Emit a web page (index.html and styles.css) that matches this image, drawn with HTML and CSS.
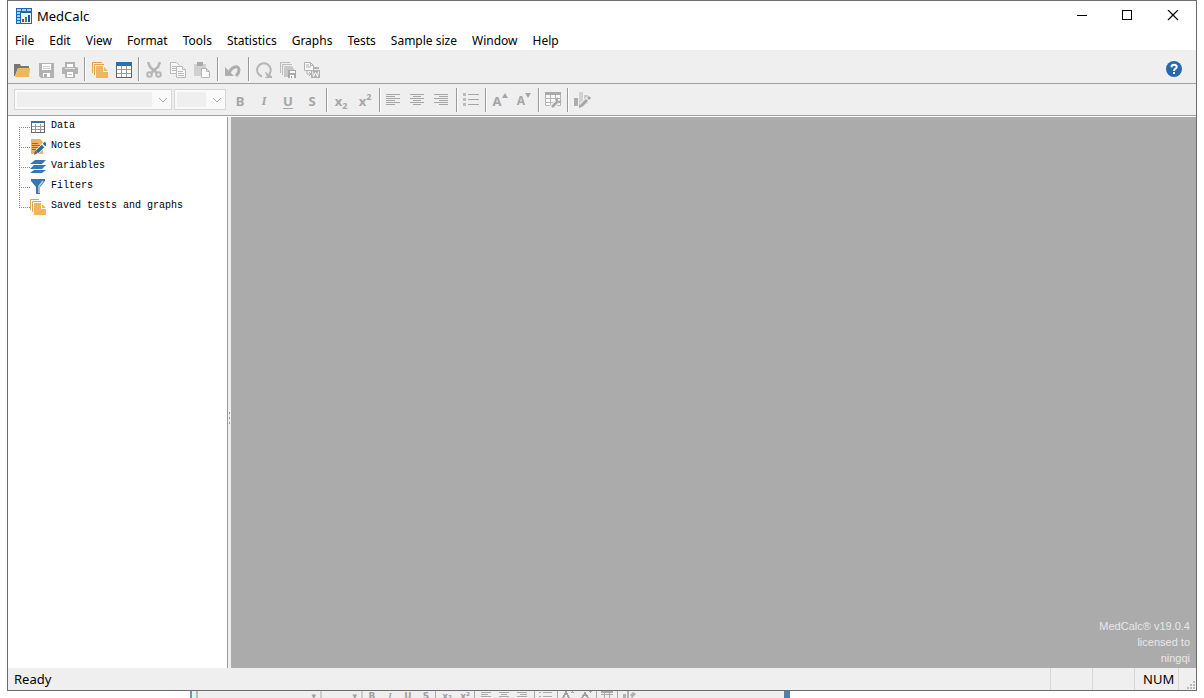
FILE: index.html
```
<!DOCTYPE html>
<html lang="en">
<head>
<meta charset="utf-8">
<title>MedCalc</title>
<link rel="stylesheet" href="styles.css">
</head>
<body>
<div class="window">
  <header class="titlebar">
    <svg class="app-icon" width="16" height="16" viewBox="0 0 16 16" shape-rendering="crispEdges">
      <path fill="#1769b5" d="M0 0h16v16H0z"/><path fill="#a9d4f5" d="M1 1h4v2H1zM6 1h4v2H6zM11 1h4v2h-4zM1 4h3v2H1zM1 7h3v2H1zM1 10h3v2H1zM1 13h3v2H1z"/><path fill="#e8f5ff" d="M5 5h10v10H5z"/><path fill="#c22a2a" d="M6 11h2v3H6z"/><path fill="#2a9a3a" d="M9 9h2v5H9z"/><path fill="#1656a8" d="M12 7h2v7h-2z"/>
    </svg>
    <h1 class="title">MedCalc</h1>
    <div class="window-controls">
      <button class="control" aria-label="Minimize"><svg width="12" height="12" viewBox="0 0 12 12" shape-rendering="crispEdges"><path fill="#000" d="M2 5h10v1H2z"/></svg></button>
      <button class="control" aria-label="Maximize"><svg width="12" height="12" viewBox="0 0 12 12" shape-rendering="crispEdges"><path fill="none" stroke="#000" d="M1.500.500h9v9h-9z"/></svg></button>
      <button class="control" aria-label="Close"><svg width="12" height="12" viewBox="0 0 12 12"><path fill="none" stroke="#000" stroke-width="1.200" d="M1 0l10 10M11 0L1 10"/></svg></button>
    </div>
  </header>
  <nav class="menubar">
    <button class="menu">File</button><button class="menu">Edit</button><button class="menu">View</button><button class="menu">Format</button><button class="menu">Tools</button><button class="menu">Statistics</button><button class="menu">Graphs</button><button class="menu">Tests</button><button class="menu">Sample size</button><button class="menu">Window</button><button class="menu">Help</button>
  </nav>
  <div class="toolbar main-tools">
    <button class="tool" aria-label="Open"><svg width="16" height="16" viewBox="0 0 16 16"><path fill="#777" d="M0 2h6l1 2h8v2H4L1 14H0z"/><path fill="#ebb862" d="M4 6h12l-1 9H1z"/></svg></button>
    <button class="tool" aria-label="Save"><svg width="16" height="16" viewBox="0 0 16 16"><path fill="#b2b2b2" d="M1 1h15v15H3l-2-2z"/><path fill="#fff" d="M4 2h9v6H4zM5 11h7v4H5z"/><path fill="#ccc" d="M5 4h7v1H5zM5 6h7v1H5z"/><path fill="#b2b2b2" d="M6 12h3v3H6z"/></svg></button>
    <button class="tool" aria-label="Print"><svg width="16" height="16" viewBox="0 0 16 16"><path fill="#b2b2b2" d="M3 0h10v5h2l1 1v6h-3v4H3v-4H0V6l1-1h2z"/><path fill="#fff" d="M5 2h6v3H5zM5 10h6v5H5z"/><path fill="#bbb" d="M6 12h4v1H6z"/><path fill="#e3e3e3" d="M3 6h10v1H3z"/></svg></button>
    <span class="sep"></span>
    <button class="tool" aria-label="Saved tests and graphs"><svg width="16" height="16" viewBox="0 0 16 16"><path fill="none" stroke="#dea64d" d="M.5 11V.5H10M2.500 13V2.500H12"/><path fill="#ebb862" d="M4 4h7v6h5v6H4zM12 5l4 4h-4z"/></svg></button>
    <button class="tool" aria-label="Data"><svg width="16" height="16" viewBox="0 0 16 16" shape-rendering="crispEdges"><path fill="#fff" d="M0 1h16v15H0z"/><path fill="none" stroke="#999" d="M5.500 4v12M10.500 4v12M0 7.500h16M0 11.500h16"/><path fill="none" stroke="#666" d="M.5 4v11.500h15V4"/><path fill="#2c6fb0" d="M0 0h16v4H0z"/></svg></button>
    <span class="sep"></span>
    <button class="tool" aria-label="Cut"><svg width="16" height="16" viewBox="0 0 16 16" fill="none" stroke="#b5b5b5" stroke-width="2"><path d="M2 0l2 5 7 6M14 0l-2 5-7 6" stroke-width="2.500"/><circle cx="3.500" cy="12.500" r="2.300"/><circle cx="12.500" cy="12.500" r="2.300"/></svg></button>
    <button class="tool" aria-label="Copy"><svg width="16" height="16" viewBox="0 0 16 16" fill="#f8f8f8" stroke="#b9b9b9"><path d="M.5.500h6l3 3v8h-9z"/><path d="M2 4.500h4M2 6.500h4M2 8.500h4"/><path d="M6.500 4.500h6l3 3v8h-9z"/><path d="M12.500 4.500v3h3M8 9.500h5M8 11.500h6M8 13.500h6"/></svg></button>
    <button class="tool" aria-label="Paste"><svg width="16" height="16" viewBox="0 0 16 16"><path fill="#d0d0d0" d="M0 2h12v12H0z"/><path fill="#aaa" d="M3 0h6v4H3z"/><path fill="#fff" stroke="#b5b5b5" d="M7.500 6.500h5l3 3v6h-8zM12.500 6.500v3h3"/></svg></button>
    <span class="sep"></span>
    <button class="tool" aria-label="Undo"><svg width="16" height="16" viewBox="0 0 16 16"><path fill="none" stroke="#aeaeae" stroke-width="3" d="M4 11C7 4 14 3 14 8c0 3-1 4-3 6"/><path fill="#aeaeae" d="M0 5v9h9z"/></svg></button>
    <span class="sep"></span>
    <button class="tool" aria-label="Recalculate"><svg width="16" height="16" viewBox="0 0 16 16"><path fill="none" stroke="#b5b5b5" stroke-width="2" d="M6 14.500A6.800 6.800 0 1 1 13 12.500"/><path fill="#b5b5b5" d="M9 10h1l2 2 4 2v2H9v-1h2z"/></svg></button>
    <button class="tool" aria-label="Save all"><svg width="16" height="16" viewBox="0 0 16 16"><path fill="none" stroke="#bbb" d="M.5 11V.5H10M2.500 13V2.500H12"/><path fill="#c8c8c8" d="M4 4h8l2 3v8H4z"/><path fill="#a8a8a8" d="M8 8h8v8H8z"/><path fill="#fff" d="M10 9h5v2h-5zM10 13h4v3h-4z"/><path fill="#999" d="M11 14h1v2h-1z"/></svg></button>
    <button class="tool" aria-label="Export to Word"><svg width="16" height="16" viewBox="0 0 16 16"><path fill="#f8f8f8" stroke="#b0b0b0" d="M.5.500h6l3 3v5h-9zM6.500.500v3h3M2 3h3M2 5h5M3 9v3h3M5 10l2 2-2 2"/><path fill="#b0b0b0" d="M10 5h5v2h-5zM7 8h9v8H7z"/><path fill="none" stroke="#fff" d="M8.500 9.500l1 5 2-4 2 4 1-5"/></svg></button>
    <button class="tool help" aria-label="Help"><svg width="16" height="16" viewBox="0 0 16 16"><circle cx="8" cy="8" r="8" fill="#2869ae"/><path fill="none" stroke="#fff" stroke-width="2" d="M5.500 6.200C5.500 3 11 3.200 10.700 6 10.500 7.800 8 7.600 8 10"/><path fill="#fff" d="M7 11h2v2H7z"/></svg></button>
  </div>
  <div class="toolbar format-tools">
    <div class="combo font-name"><select class="combo-field" aria-label="Font" disabled><option></option></select><svg class="chevron" width="10" height="6" viewBox="0 0 10 6"><path d="M1 1l4 4 4-4"/></svg></div>
    <div class="combo font-size"><select class="combo-field" aria-label="Font size" disabled><option></option></select><svg class="chevron" width="10" height="6" viewBox="0 0 10 6"><path d="M1 1l4 4 4-4"/></svg></div>
    <button class="tool letter" disabled>B</button>
    <button class="tool letter italic" disabled>I</button>
    <button class="tool letter underline" disabled>U</button>
    <button class="tool letter" disabled>S</button>
    <span class="sep"></span>
    <button class="tool letter" disabled>x<sub class="low">2</sub></button>
    <button class="tool letter" disabled>x<sup class="high">2</sup></button>
    <span class="sep"></span>
    <button class="tool" aria-label="Align left" disabled><svg width="16" height="12" viewBox="0 0 16 12" shape-rendering="crispEdges"><path fill="#a5a5a5" d="M0 0h14v1H0zM0 2h9v1H0zM0 4h14v1H0zM0 6h9v1H0zM0 8h14v1H0zM0 10h9v1H0z"/></svg></button>
    <button class="tool" aria-label="Center" disabled><svg width="16" height="12" viewBox="0 0 16 12" shape-rendering="crispEdges"><path fill="#a5a5a5" d="M0 0h14v1H0zM3 2h8v1H3zM0 4h14v1H0zM3 6h8v1H3zM0 8h14v1H0zM3 10h8v1H3z"/></svg></button>
    <button class="tool" aria-label="Align right" disabled><svg width="16" height="12" viewBox="0 0 16 12" shape-rendering="crispEdges"><path fill="#a5a5a5" d="M0 0h14v1H0zM5 2h9v1H5zM0 4h14v1H0zM5 6h9v1H5zM0 8h14v1H0zM5 10h9v1H5z"/></svg></button>
    <span class="sep"></span>
    <button class="tool" aria-label="List" disabled><svg width="16" height="14" viewBox="0 0 16 14"><path fill="#bbb" d="M0 0h3v3H0zM0 5h3v3H0zM0 10h3v3H0z"/><path fill="#a5a5a5" d="M5 1h11v1H5zM5 6h11v1H5zM5 11h11v1H5z"/></svg></button>
    <span class="sep"></span>
    <button class="tool letter" aria-label="Larger text" disabled>A<svg class="size-mark" width="6" height="5" viewBox="0 0 6 5"><path fill="#a5a5a5" d="M3 0l3 5H0z"/></svg></button>
    <button class="tool letter smaller" aria-label="Smaller text" disabled>A<svg class="size-mark" width="6" height="5" viewBox="0 0 6 5"><path fill="#a5a5a5" d="M0 0h6L3 5z"/></svg></button>
    <span class="sep"></span>
    <button class="tool" aria-label="Table settings" disabled><svg width="16" height="16" viewBox="0 0 16 16"><path fill="#f8f8f8" stroke="#b5b5b5" d="M.5 1.500h15v12H.5zM5.500 2v12M10.500 2v12M0 6.500h16M0 10.500h16"/><path fill="#aaa" d="M0 0h16v3H0z"/><path fill="none" stroke="#efefef" stroke-width="5" d="M6 16l8-8"/><path fill="none" stroke="#a5a5a5" stroke-width="2.500" d="M7 15l5-5"/><path fill="none" stroke="#a5a5a5" stroke-width="2" d="M13 6c-3 2 0 6 3 3"/></svg></button>
    <span class="sep"></span>
    <button class="tool" aria-label="Edit graph" disabled><svg width="17" height="16" viewBox="0 0 17 16"><path fill="#adadad" d="M0 6h4v8H0z"/><path fill="#d2d2d2" d="M5 0h4v14H5z"/><path fill="#c8c8c8" d="M10 3h4v9h-4z"/><path fill="none" stroke="#efefef" stroke-width="5" d="M6 15L15 6"/><path fill="none" stroke="#a5a5a5" stroke-width="3" d="M7 14l6-6M14 7l2-2"/><path fill="#a5a5a5" d="M5 12l3 3-3 1z"/></svg></button>
  </div>
  <div class="workspace">
    <aside class="sidebar">
      <svg class="branches" width="11" height="82" viewBox="0 0 11 82" shape-rendering="crispEdges"><path fill="none" stroke="#888" stroke-dasharray="1 1" d="M.5 0v81M0 .500h11M0 20.500h11M0 40.500h11M0 60.500h11M0 80.500h11"/></svg>
      <ul class="tree">
        <li class="node"><svg class="node-icon" width="16" height="16" viewBox="0 0 16 16" shape-rendering="crispEdges"><path fill="#fff" d="M1 2h14v12H1z"/><path fill="none" stroke="#999" d="M5.500 5v9M10.500 5v9M1 7.500h14M1 10.500h14"/><path fill="none" stroke="#666" d="M1.500 2.500h13v11h-13z"/><path fill="#2f71b2" d="M1 2h14v2H1z"/></svg><span class="node-name">Data</span></li>
        <li class="node"><svg class="node-icon" width="16" height="16" viewBox="0 0 16 16"><path fill="#efb45c" d="M1 0h9l3 3v12H1z"/><path stroke="#886d45" d="M2 4.500h6M2 6.500h8M2 8.500h7M2 10.500h5"/><path stroke="#fff" stroke-width="5" d="M6 14l9-9"/><path stroke="#2869ae" stroke-width="3.500" d="M7 13l6-6M14 6l2-2"/><path fill="#666" d="M5 11l3 3-4 2z"/></svg><span class="node-name">Notes</span></li>
        <li class="node"><svg class="node-icon" width="16" height="16" viewBox="0 0 16 16" fill="#3378b5"><path d="M5 1h11l-4 4H0zM4 6h12l-4 4H0zM4 11h12l-4 3H0z"/></svg><span class="node-name">Variables</span></li>
        <li class="node"><svg class="node-icon" width="16" height="16" viewBox="0 0 16 16"><path fill="#3378b5" d="M1 0h14v2l-5 6v7H6V8L1 2z"/><path fill="none" stroke="#c9ccd0" stroke-width="1.500" d="M13 2L9 7v7"/></svg><span class="node-name">Filters</span></li>
        <li class="node"><svg class="node-icon" width="16" height="16" viewBox="0 0 16 16"><path fill="none" stroke="#dea64d" d="M.5 11V.5H9M2.500 13V2.500H11"/><path fill="#efb45c" d="M4 4h7v6h5v6H4zM12 5l4 4h-4z"/></svg><span class="node-name">Saved tests and graphs</span></li>
      </ul>
    </aside>
    <div class="splitter"><i></i><i></i><i></i></div>
    <main class="canvas"><p class="license">MedCalc® v19.0.4<br>licensed to<br>ningqi</p></main>
  </div>
  <footer class="statusbar">
    <span class="message">Ready</span><span class="cell"></span><span class="cell"></span><span class="cell num">NUM</span>
    <span class="cell grip"><svg width="9" height="9" viewBox="0 0 9 9" shape-rendering="crispEdges"><path fill="#bbb" d="M6 0h2v2H6zM3 3h2v2H3zM6 3h2v2H6zM0 6h2v2H0zM3 6h2v2H3zM6 6h2v2H6z"/></svg></span>
  </footer>
</div>
<div class="behind" aria-hidden="true">
  <div class="behind-window">
    <span class="behind-combo wide">▾</span><span class="behind-combo">▾</span>
    <span class="behind-tool">B</span><span class="behind-tool italic">I</span><span class="behind-tool">U</span><span class="behind-tool">S</span><span class="behind-sep"></span>
    <span class="behind-tool">x₂</span><span class="behind-tool">x²</span><span class="behind-sep"></span>
    <svg width="140" height="7" viewBox="0 0 140 7" shape-rendering="crispEdges"><path fill="#aaa" d="M4 1h10v1H4zM4 3h7v1H4zM4 5h10v1H4zM22 1h10v1H22zM24 3h6v1h-6zM22 5h10v1H22zM40 1h10v1H40zM43 3h7v1h-7zM40 5h10v1H40zM57 0h1v7h-1zM62 1h2v1h-2zM66 1h9v1h-9zM62 5h2v1h-2zM66 5h9v1h-9zM80 0h1v7h-1z"/><path fill="none" stroke="#a0a0a0" stroke-width="2" d="M86 7l3-6 3 6M105 7l3-5 3 5"/><path fill="#aaa" d="M93 2l2-2 2 2zM111 0h4l-2 2zM119 0h1v7h-1zM124 0h12v2h-12zM124 3h12v1h-12zM127 2h1v5h-1zM132 2h1v5h-1z"/></svg>
    <span class="behind-sep"></span>
    <svg width="18" height="7" viewBox="0 0 18 7"><path fill="#b0b0b0" d="M3 3h3v4H3zM7 0h2v7H7zM10 4l3-3 3 2-4 4z"/></svg>
  </div>
</div>
</body>
</html>
```
FILE: styles.css
```
* { box-sizing: border-box; }
body {
  margin: 0;
  min-height: 100vh;
  display: flex;
  flex-direction: column;
  background: #fff;
  color: #000;
  font: 12px/16px "Noto Sans", sans-serif;
}
button { font: inherit; color: inherit; background: none; border: 0; padding: 0; }
svg { display: block; flex: none; }
.window {
  flex: 1;
  margin: 0 7px;
  display: flex;
  flex-direction: column;
  border: 1px solid #6c6c6c;
  background: #fff;
}
.titlebar { display: flex; align-items: center; height: 29px; padding-left: 8px; }
.title { margin: 0 0 0 5px; font-size: 13px; font-weight: 400; line-height: 16px; }
.window-controls { display: flex; margin-left: auto; }
.control { width: 46px; height: 29px; display: flex; align-items: center; justify-content: center; }
.menubar { display: flex; gap: 15px; height: 20px; padding-left: 7px; }
.menu { line-height: 20px; padding-top: 1px; }
.toolbar { display: flex; align-items: center; background: #efefef; border-bottom: 1px solid #a0a0a0; }
.main-tools { height: 34px; padding: 5px 10px 0 2px; }
.format-tools { height: 32px; padding-left: 6px; }
.tool { width: 24px; height: 24px; flex: none; display: flex; align-items: center; justify-content: center; }
.main-tools .tool { padding-top: 1px; }
.main-tools .help { margin-left: auto; padding-top: 0; }
.sep { width: 7px; height: 24px; flex: none; background: linear-gradient(90deg, #999 50%, #fff 50%) center / 2px 100% no-repeat; }
.main-tools .sep { width: 6px; }
.main-tools .sep:nth-of-type(n+3) { width: 7px; }
.format-tools .sep { width: 5px; }
.combo { position: relative; flex: none; height: 21px; margin-right: 2px; }
.font-name { width: 158px; }
.font-size { width: 52px; }
.combo-field {
  appearance: none;
  width: 100%;
  height: 100%;
  padding: 0;
  border: 1px solid #ccc;
  border-radius: 0;
  background: linear-gradient(#efefef, #efefef) 2px 2px / calc(100% - 21px) 15px no-repeat #fff;
}
.chevron { position: absolute; right: 4px; top: 8px; fill: none; stroke: #aaa; }
.letter { padding-top: 2px; color: #a5a5a5; font: bold 13px/16px "Noto Sans", sans-serif; }
.italic { font-family: "Liberation Serif", serif; font-style: italic; }
.underline { text-decoration: underline; text-underline-offset: 2px; }
.low, .high { font-size: 9px; line-height: 10px; }
.low { margin-top: 10px; }
.high { margin-bottom: 8px; }
.smaller { font-size: 12px; }
.size-mark { align-self: flex-start; margin-top: 3px; }
.workspace { flex: 1; display: flex; padding-top: 1px; }
.sidebar { width: 220px; flex: none; display: flex; align-items: flex-start; border-right: 1px solid #999; padding-left: 11px; }
.branches { margin-top: 10px; }
.tree { list-style: none; margin: 0; padding: 0; font: 10px/16px "Liberation Mono", monospace; }
.node { display: flex; gap: 5px; height: 20px; }
.node-icon { margin-top: 2px; }
.node-name { padding-top: 1px; }
.splitter { width: 3px; display: flex; flex-direction: column; align-items: center; justify-content: center; gap: 3px; padding-top: 50px; background: #efefef; }
.splitter i { width: 1px; height: 2px; background: #999; }
.canvas { flex: 1; display: flex; align-items: flex-end; justify-content: flex-end; padding: 0 6px 2px; background: #ababab; }
.license { margin: 0; color: #e8e8e8; font: 11px/16px "Liberation Sans", sans-serif; text-align: right; }
.statusbar { display: flex; height: 22px; background: #efefef; font-size: 13px; line-height: 22px; }
.message { flex: 1; padding-left: 6px; }
.cell { width: 42px; border-left: 1px solid #d7d7d7; }
.num { width: 44px; padding-left: 8px; }
.grip { width: 18px; display: flex; align-items: flex-end; justify-content: flex-end; }
.behind { height: 7px; padding-left: 190px; overflow: hidden; }
.behind-window {
  display: flex;
  width: 600px;
  height: 7px;
  overflow: hidden;
  padding-left: 8px;
  border-left: 2px solid #6d9c9c;
  border-right: 6px solid #4e7faf;
  background: linear-gradient(90deg, #dff5f8 4px, #bbb 4px, #bbb 6px, #efefef 6px);
  color: #a0a0a0;
  font: bold 9px/10px "DejaVu Sans", sans-serif;
}
.behind-combo { width: 41px; padding-right: 4px; border-right: 2px solid #ccc; text-align: right; }
.behind-combo.wide { width: 122px; }
.behind-tool { width: 18px; text-align: center; }
.behind-sep { width: 3px; border-left: 1px solid #aaa; }
```
